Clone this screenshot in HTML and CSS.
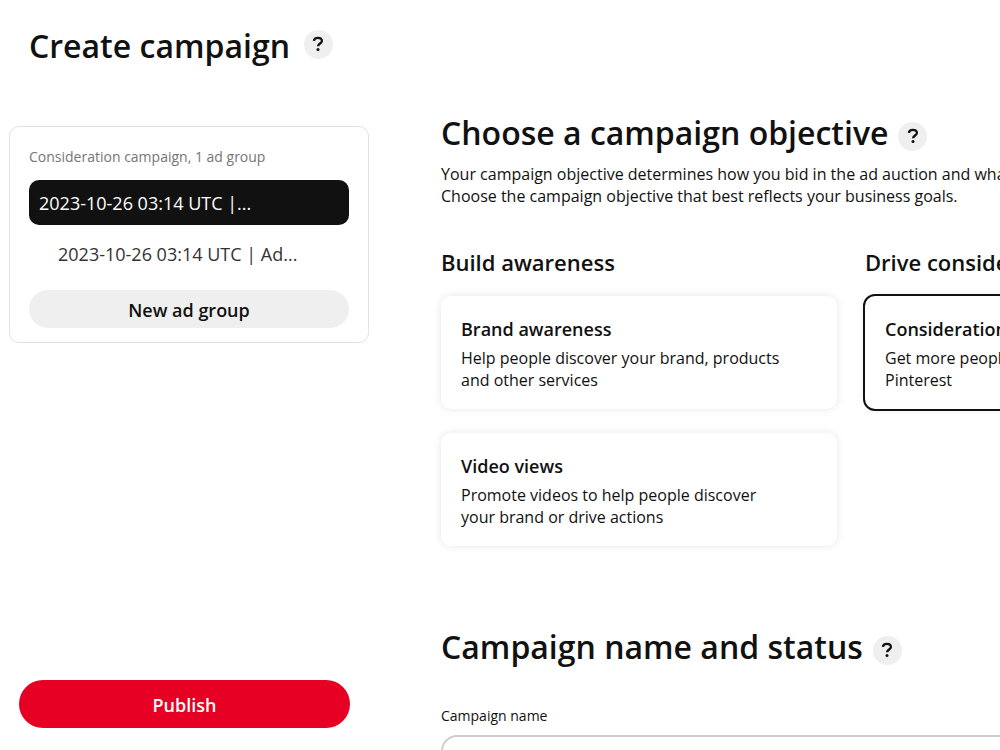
FILE: index.html
```html
<!DOCTYPE html>
<html lang="en">
<head>
<meta charset="utf-8">
<meta name="viewport" content="width=device-width, initial-scale=1">
<title>Create campaign</title>
<link rel="stylesheet" href="styles.css">
</head>
<body>
<div class="layout">
  <aside class="sidebar">
    <header class="page-title">
      <h1 class="heading">Create campaign</h1>
      <button class="help" type="button" aria-label="Help with creating a campaign">
        <svg class="help-icon" viewBox="0 0 12 16" aria-hidden="true"><path d="M1.9 4.9C2.1 2.9 3.7 1.8 5.9 1.8c2.4 0 4 1.2 4 3.1 0 2.5-3.8 2.7-3.8 5.3"/><circle cx="6" cy="13.4" r="1.5"/></svg>
      </button>
    </header>
    <nav class="outline" aria-label="Campaign outline">
      <p class="outline-summary">Consideration campaign, 1 ad group</p>
      <a class="outline-item outline-campaign" href="#campaign">2023-10-26 03:14 UTC |...</a>
      <a class="outline-item outline-group" href="#group">2023-10-26 03:14 UTC | Ad...</a>
      <button class="new-group" type="button">New ad group</button>
    </nav>
    <button class="publish" type="button">Publish</button>
  </aside>
  <main class="content" id="campaign">
    <section class="objective">
      <div class="section-title">
        <h2 class="heading">Choose a campaign objective</h2>
        <button class="help" type="button" aria-label="Help with objectives">
          <svg class="help-icon" viewBox="0 0 12 16" aria-hidden="true"><path d="M1.9 4.9C2.1 2.9 3.7 1.8 5.9 1.8c2.4 0 4 1.2 4 3.1 0 2.5-3.8 2.7-3.8 5.3"/><circle cx="6" cy="13.4" r="1.5"/></svg>
        </button>
      </div>
      <p class="intro">Your campaign objective determines how you bid in the ad auction and what<br>Choose the campaign objective that best reflects your business goals.</p>
      <div class="columns">
        <div class="column">
          <h3 class="column-title">Build awareness</h3>
          <button class="card" type="button">
            <span class="card-title">Brand awareness</span>
            <span class="card-text">Help people discover your brand, products<br>and other services</span>
          </button>
          <button class="card" type="button">
            <span class="card-title">Video views</span>
            <span class="card-text">Promote videos to help people discover<br>your brand or drive actions</span>
          </button>
        </div>
        <div class="column">
          <h3 class="column-title">Drive consideration</h3>
          <button class="card card-selected" type="button" aria-pressed="true">
            <span class="card-title">Consideration</span>
            <span class="card-text">Get more people<br>Pinterest</span>
          </button>
        </div>
      </div>
    </section>
    <section class="details">
      <div class="section-title">
        <h2 class="heading">Campaign name and status</h2>
        <button class="help" type="button" aria-label="Help with name and status">
          <svg class="help-icon" viewBox="0 0 12 16" aria-hidden="true"><path d="M1.9 4.9C2.1 2.9 3.7 1.8 5.9 1.8c2.4 0 4 1.2 4 3.1 0 2.5-3.8 2.7-3.8 5.3"/><circle cx="6" cy="13.4" r="1.5"/></svg>
        </button>
      </div>
      <label class="field-label" for="campaign-name">Campaign name</label>
      <input class="field" id="campaign-name" type="text">
    </section>
  </main>
</div>
</body>
</html>
```
FILE: styles.css
```css
* { box-sizing: border-box; }
body {
  margin: 0;
  background: #fff;
  color: #111;
  font-family: "Segoe UI", "Open Sans", "Noto Sans", sans-serif;
  font-size: 16px;
  line-height: 22px;
}
h1, h2, h3, p { margin: 0; }
button { border: 0; font: inherit; color: inherit; cursor: pointer; }
.layout {
  display: grid;
  grid-template-columns: 360px minmax(0, 1fr);
  column-gap: 72px;
  height: 100vh;
  padding-left: 9px;
  overflow: hidden;
}
.sidebar {
  display: flex;
  flex-direction: column;
  padding: 22px 0;
}
.page-title { display: flex; align-items: center; gap: 14px; padding: 0 20px; }
.page-title .help { margin-bottom: 4px; }
.heading { font-size: 32px; font-weight: 600; line-height: 48px; white-space: nowrap; }
.help {
  display: grid;
  place-items: center;
  flex: none;
  width: 29px;
  height: 29px;
  padding: 0;
  border-radius: 50%;
  background: #efefef;
}
.help-icon { width: 12px; height: 16px; fill: #111; }
.help-icon path { fill: none; stroke: #111; stroke-width: 2.3; }
.outline {
  display: flex;
  flex-direction: column;
  margin-top: 56px;
  padding: 19px 19px 14px;
  border: 1px solid #e2e2e2;
  border-radius: 10px;
}
.outline-summary { color: #767676; font-size: 14px; }
.outline-item { color: #333; font-size: 18px; text-decoration: none; white-space: nowrap; }
.outline-campaign {
  margin-top: 12px;
  padding: 11px 10px 9px;
  border-radius: 10px;
  background: #111;
  color: #fff;
  line-height: 25px;
}
.outline-group { padding: 17px 29px 19px; line-height: 24px; }
.new-group {
  margin-top: 5px;
  padding: 9px 8px 7px;
  border-radius: 19px;
  background: #efefef;
  font-size: 18px;
  font-weight: 600;
}
.publish {
  margin: auto 19px 0 10px;
  padding: 14px 13px 12px;
  border-radius: 24px;
  background: #e60023;
  color: #fff;
  font-size: 18px;
  font-weight: 600;
}
.content { padding-top: 109px; overflow: hidden; padding-left: 10px; margin-left: -10px; }
.section-title { display: flex; align-items: center; gap: 10px; }
.section-title .help { margin-top: 6px; }
.intro { margin-top: 6px; white-space: nowrap; }
.columns { display: grid; grid-template-columns: repeat(2, 396px); gap: 28px; margin-top: 42px; }
.column { display: flex; flex-direction: column; gap: 24px; }
.column-title { margin-bottom: -3px; font-size: 22px; font-weight: 600; line-height: 26px; }
.card {
  padding: 22px 20px 18px;
  border-radius: 10px;
  background: #fff;
  box-shadow: 0 0 8px rgba(0, 0, 0, 0.1);
  text-align: left;
}
.card-selected { outline: 2px solid #111; }
.card-title, .card-text { display: block; }
.card-title { font-size: 18px; font-weight: 600; }
.card-text { margin-top: 7px; white-space: nowrap; }
.details { display: flex; flex-direction: column; margin-top: 77px; }
.field-label { margin-top: 34px; font-size: 14px; }
.field {
  width: 100%;
  min-width: 600px;
  height: 48px;
  margin-top: 8px;
  padding: 0 16px;
  border: 2px solid #cdcdcd;
  border-radius: 16px;
  font: inherit;
}
```
